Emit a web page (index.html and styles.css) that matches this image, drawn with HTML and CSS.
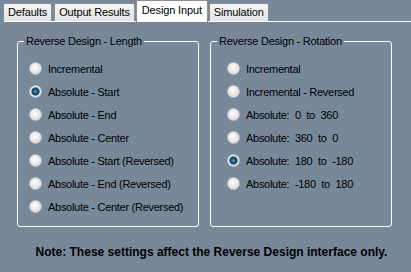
FILE: index.html
```html
<!DOCTYPE html>
<html>
<head>
<meta charset="utf-8">
<link rel="stylesheet" href="styles.css">
</head>
<body>
<div class="window">
  <div class="tabstrip">
    <div class="tab">Defaults</div>
    <div class="tab">Output Results</div>
    <div class="tab active">Design Input</div>
    <div class="tab">Simulation</div>
  </div>
  <div class="page">
    <div class="groups">
      <div class="group">
        <span class="legend">Reverse Design - Length</span>
        <ul class="options">
          <li class="option"><span class="radio"></span>Incremental</li>
          <li class="option"><span class="radio checked"></span>Absolute - Start</li>
          <li class="option"><span class="radio"></span>Absolute - End</li>
          <li class="option"><span class="radio"></span>Absolute - Center</li>
          <li class="option"><span class="radio"></span>Absolute - Start (Reversed)</li>
          <li class="option"><span class="radio"></span>Absolute - End (Reversed)</li>
          <li class="option"><span class="radio"></span>Absolute - Center (Reversed)</li>
        </ul>
      </div>
      <div class="group group-right">
        <span class="legend">Reverse Design - Rotation</span>
        <ul class="options">
          <li class="option"><span class="radio"></span>Incremental</li>
          <li class="option"><span class="radio"></span>Incremental - Reversed</li>
          <li class="option"><span class="radio"></span>Absolute:&nbsp; 0&nbsp; to&nbsp; 360</li>
          <li class="option"><span class="radio"></span>Absolute:&nbsp; 360&nbsp; to&nbsp; 0</li>
          <li class="option"><span class="radio checked"></span>Absolute:&nbsp; 180&nbsp; to&nbsp; -180</li>
          <li class="option"><span class="radio"></span>Absolute:&nbsp; -180&nbsp; to&nbsp; 180</li>
        </ul>
      </div>
    </div>
    <p class="note">Note: These settings affect the Reverse Design interface only.</p>
  </div>
</div>
</body>
</html>
```

FILE: styles.css
```css
html, body {
  margin: 0;
  padding: 0;
}
body {
  background: #778899;
  font-family: "Liberation Sans", Arial, sans-serif;
  font-size: 11px;
  color: #000;
}
.window {
  width: 411px;
  height: 272px;
  overflow: hidden;
}
.tabstrip {
  display: flex;
  align-items: flex-end;
  height: 21px;
  padding-left: 3px;
  gap: 2px;
}
.tab {
  box-sizing: border-box;
  height: 18px;
  line-height: 16px;
  padding: 0 4px;
  letter-spacing: -0.15px;
  background: linear-gradient(#f4f4f4, #e4e4e4);
  border: 1px solid #8d9092;
  border-bottom: none;
  border-radius: 2px 2px 0 0;
  color: #000;
}
.tab.active {
  position: relative;
  z-index: 1;
  height: 22px;
  line-height: 18px;
  margin: 0 -1px -1px -1px;
  padding: 0 5px;
  background: #fff;
  border-color: #8d9092;
}
.page {
  margin-left: 4px;
  border-top: 1px solid #fff;
  padding-top: 19px;
}
.groups {
  display: flex;
  gap: 11px;
  padding-left: 13px;
}
.group {
  position: relative;
  box-sizing: border-box;
  width: 182px;
  height: 186px;
  border: 1px solid #fff;
  border-radius: 3px;
}
.legend {
  position: absolute;
  top: -7px;
  left: 6px;
  padding: 0 2px;
  line-height: 13px;
  letter-spacing: -0.25px;
  background: #778899;
}
.options {
  list-style: none;
  margin: 0;
  padding: 15px 0 0 11px;
}
.group-right .options {
  padding-left: 16px;
}
.option {
  display: flex;
  align-items: center;
  gap: 6px;
  height: 23px;
  white-space: nowrap;
  letter-spacing: -0.28px;
}
.radio {
  flex: none;
  box-sizing: border-box;
  width: 13px;
  height: 13px;
  border-radius: 50%;
  border: 1px solid #bfc2c5;
  background: radial-gradient(circle at 45% 40%, #ffffff 0, #ececec 40%, #d2d2d2 100%);
}
.radio.checked {
  background: radial-gradient(circle at 50% 50%, #6aa6c8 0, #2a6890 1.5px, #163e5c 3.5px, #d6d6d6 4.5px, #e6e6e6 5px, #cacaca 100%);
}
.note {
  margin: 18px 0 0;
  padding-left: 8px;
  text-align: center;
  font-weight: bold;
  font-size: 12px;
  line-height: 14px;
}
```
